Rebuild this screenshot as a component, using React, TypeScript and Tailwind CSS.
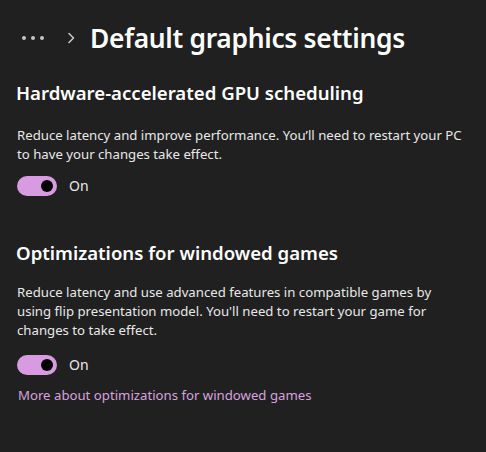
import React from "react";

function Toggle() {
  return (
    <div className="w-[40px] h-[20px] rounded-full bg-[#d89ae0] flex items-center justify-end pr-[4px]">
      <div className="w-[12px] h-[12px] rounded-full bg-black" />
    </div>
  );
}

export default function App() {
  return (
    <div
      className="w-[486px] h-[452px] bg-[#202020] text-white overflow-hidden"
      style={{ fontFamily: '"Noto Sans", "Open Sans", sans-serif' }}
    >
      <div className="flex items-center pl-[22px] pt-[18px] h-[58px]">
        <div className="flex items-center gap-[5px]">
          <span className="w-[4px] h-[4px] rounded-full bg-[#c5c5c5]" />
          <span className="w-[4px] h-[4px] rounded-full bg-[#c5c5c5]" />
          <span className="w-[4px] h-[4px] rounded-full bg-[#c5c5c5]" />
        </div>
        <svg width="10" height="12" viewBox="0 0 10 12" className="ml-[22px]">
          <path d="M3 1.5 L7.5 6 L3 10.5" stroke="#c5c5c5" strokeWidth="1.6" fill="none" strokeLinecap="round" strokeLinejoin="round" />
        </svg>
        <h1 className="ml-[14px] text-[26.4px] font-semibold leading-none tracking-[-0.3px]">Default graphics settings</h1>
      </div>

      <div className="pl-[16px] pr-[12px]">
        <h2 className="mt-[22px] text-[18.6px] font-semibold leading-[26px]">Hardware-accelerated GPU scheduling</h2>
        <p className="mt-[20px] max-w-[448px] text-[13.2px] leading-[19px] text-[#e8e8e8] pl-[1px]">
          Reduce latency and improve performance. You’ll need to restart your PC to have your changes take effect.
        </p>
        <div className="mt-[11px] flex items-center gap-[12px] pl-[1px]">
          <Toggle />
          <span className="text-[14px] text-[#e8e8e8]">On</span>
        </div>

        <h2 className="mt-[44px] text-[18.6px] font-semibold leading-[26px]">Optimizations for windowed games</h2>
        <p className="mt-[17px] max-w-[448px] text-[13.2px] leading-[19px] text-[#e8e8e8] pl-[1px]">
          Reduce latency and use advanced features in compatible games by using flip presentation model. You'll need to restart your game for changes to take effect.
        </p>
        <div className="mt-[14px] flex items-center gap-[12px] pl-[1px]">
          <Toggle />
          <span className="text-[14px] text-[#e8e8e8]">On</span>
        </div>
        <a className="block mt-[11px] pl-[2px] text-[13.2px] text-[#d6a3df]">More about optimizations for windowed games</a>
      </div>
    </div>
  );
}
